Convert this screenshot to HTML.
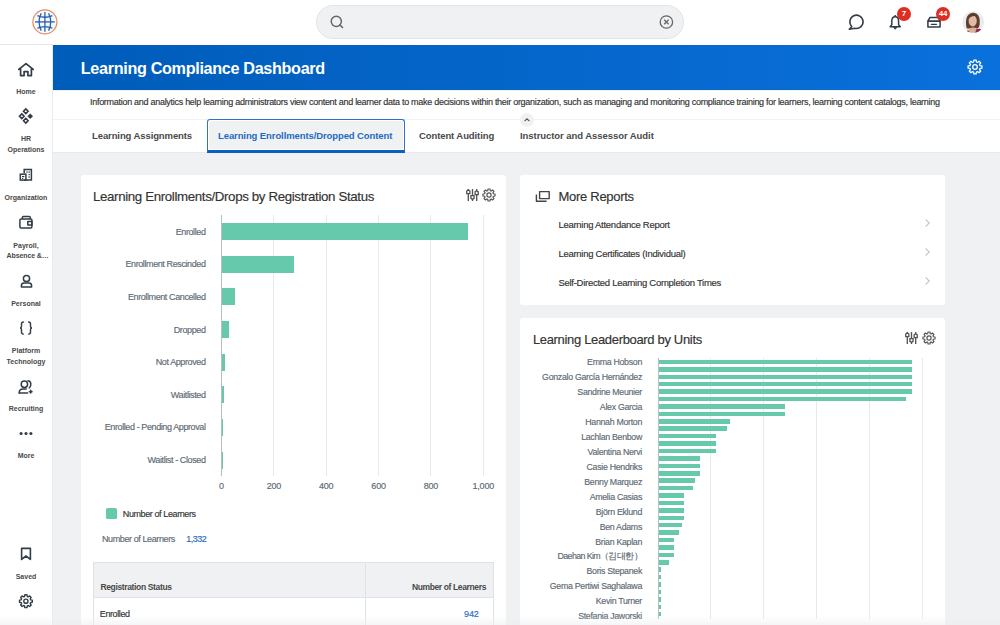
<!DOCTYPE html>
<html><head><meta charset="utf-8"><style>
html,body{margin:0;padding:0;width:1000px;height:625px;overflow:hidden;background:#fff;font-family:"Liberation Sans", sans-serif;}
.t{position:absolute;white-space:nowrap;font-family:"Liberation Sans", sans-serif;}
svg{overflow:visible}
</style></head><body>
<div style="position:absolute;left:53px;top:45px;width:947px;height:580px;background:#f0f1f2"></div>
<div style="position:absolute;left:0px;top:0px;width:1000px;height:44px;background:#fff"></div>
<div style="position:absolute;left:0px;top:44px;width:53px;height:1px;background:#e4e7ea"></div>
<svg style="position:absolute;left:31px;top:8px" width="28" height="28" viewBox="0 0 28 28"><circle cx="13.9" cy="13.9" r="12" fill="#f4faff" stroke="#e58a5a" stroke-width="1.2"/>
<g fill="none" stroke="#2b5ea9" stroke-width="1.3">
<line x1="13.9" y1="4.1" x2="13.9" y2="23.7"/><line x1="4" y1="13.9" x2="23.8" y2="13.9"/>
<path d="M10.2 5.2 Q6 14 10.2 22.6"/><path d="M17.6 5.2 Q21.8 14 17.6 22.6"/>
<path d="M6.4 7.6 Q13.9 10.9 21.4 7.6"/><path d="M6.4 20.2 Q13.9 16.9 21.4 20.2"/>
</g></svg>
<div style="position:absolute;left:316px;top:5px;width:368px;height:34px;background:#f0f1f2;border:1px solid #e2e5e8;border-radius:17px;box-sizing:border-box"></div>
<svg style="position:absolute;left:328px;top:13px" width="18" height="18" viewBox="0 0 18 18"><circle cx="8.3" cy="8.3" r="5.1" fill="none" stroke="#666" stroke-width="1.5"/><line x1="12" y1="12" x2="14.5" y2="14.5" stroke="#666" stroke-width="1.6" stroke-linecap="round"/></svg>
<svg style="position:absolute;left:658px;top:14px" width="17" height="17" viewBox="0 0 17 17"><circle cx="8.4" cy="8" r="6.2" fill="none" stroke="#666" stroke-width="1.3"/><path d="M6.2 5.8 L10.6 10.2 M10.6 5.8 L6.2 10.2" stroke="#666" stroke-width="1.3"/></svg>
<svg style="position:absolute;left:846px;top:12px" width="20" height="20" viewBox="0 0 20 20"><path d="M5.83 14.47 L3.3 17.3 L8.8 16.17 A6.6 6.6 0 1 0 5.83 14.47 Z" fill="none" stroke="#333d47" stroke-width="1.55" stroke-linejoin="round"/></svg>
<svg style="position:absolute;left:887px;top:12.8px" width="17" height="18" viewBox="0 0 17 18"><path d="M8.2 3.7 C5.6 3.7 4.8 5.9 4.8 8.1 L4.8 11.7 L3.1 13.7 L13.3 13.7 L11.6 11.7 L11.6 8.1 C11.6 5.9 10.8 3.7 8.2 3.7 Z" fill="none" stroke="#333d47" stroke-width="1.5" stroke-linejoin="round"/><path d="M6.5 14.3 L9.9 14.3 L8.2 16.3 Z" fill="#333d47" stroke="#333d47" stroke-width="0.8" stroke-linejoin="round"/><circle cx="8.2" cy="3" r="1" fill="#333d47"/></svg>
<div style="position:absolute;left:897px;top:7px;width:14px;height:14px;background:#de2e21;border-radius:50%"></div>
<div class="t" style="top:10.23px;font-size:8px;line-height:8px;font-weight:700;color:#fff;letter-spacing:0px;left:604px;width:600px;text-align:center;">7</div>
<svg style="position:absolute;left:925px;top:15px" width="18" height="15" viewBox="0 0 18 15"><path d="M2.9 6.2 L4.8 2.6 L13.2 2.6 L15.1 6.2 Z" fill="none" stroke="#333d47" stroke-width="1.5" stroke-linejoin="round"/><rect x="2.9" y="6.2" width="12.2" height="5.7" fill="none" stroke="#333d47" stroke-width="1.5" stroke-linejoin="round"/><line x1="6.3" y1="9.3" x2="11.5" y2="9.3" stroke="#333d47" stroke-width="1.3" stroke-linecap="round"/></svg>
<div style="position:absolute;left:936px;top:7px;width:14px;height:14px;background:#de2e21;border-radius:50%"></div>
<div class="t" style="top:10.23px;font-size:8px;line-height:8px;font-weight:700;color:#fff;letter-spacing:-0.3px;left:643px;width:600px;text-align:center;">44</div>
<svg style="position:absolute;left:961px;top:10px" width="24" height="24" viewBox="0 0 24 24"><defs><clipPath id="av"><circle cx="12.2" cy="12" r="10.8"/></clipPath></defs>
<circle cx="12.2" cy="12" r="10.8" fill="#ececec"/>
<g clip-path="url(#av)">
<path d="M5.8 18.4 C4.2 13 4.4 3.6 11.6 2.8 C17.8 2.6 19.2 8.5 18.7 12.5 C18.9 15.5 18.1 17.6 16.6 18.4 Z" fill="#5e3f2e"/>
<ellipse cx="11.7" cy="10.9" rx="4.1" ry="5.6" fill="#dfbaa5"/>
<path d="M7.4 8.6 C8.2 4.6 12.5 3.6 16 5.8 C13.5 5.6 10.5 6.2 7.4 8.6Z" fill="#5b3b2b"/>
<path d="M5.5 24 C6.5 19.5 9 17.6 12 17.6 C15 17.6 17.5 19 18.8 24Z" fill="#d9b09a"/>
<path d="M14.2 24 L15 19.6 C17.2 18.4 19.6 18.6 21.5 20.4 L21.5 24Z" fill="#9e2450"/>
<path d="M4.5 24 L6.2 20.6 L8.4 21.2 L7.8 24Z" fill="#9e2450"/>
</g></svg>
<div style="position:absolute;left:0px;top:45px;width:52px;height:580px;background:#fff"></div>
<div style="position:absolute;left:52px;top:45px;width:1px;height:580px;background:#e8ebed"></div>
<svg style="position:absolute;left:17px;top:61px" width="18" height="17" viewBox="0 0 18 17"><path d="M1.8 8.4 L9 2.6 L16.2 8.4 M3.6 7 L3.6 14.6 L7.1 14.6 L7.1 10.6 L10.9 10.6 L10.9 14.6 L14.4 14.6 L14.4 7" fill="none" stroke="#333d47" stroke-width="1.7" stroke-linejoin="round" stroke-linecap="round"/></svg>
<div class="t" style="top:88.27px;font-size:7px;line-height:7px;font-weight:700;color:#494949;letter-spacing:0px;left:-274px;width:600px;text-align:center;">Home</div>
<svg style="position:absolute;left:18px;top:108px" width="17" height="17" viewBox="0 0 17 17"><g fill="none" stroke="#333d47" stroke-width="1.6"><path d="M7.8 0.9 L10.1 3.2 L7.8 5.5 L5.5 3.2Z"/><path d="M3.8 5.9 L6.1 8.2 L3.8 10.5 L1.5 8.2Z"/><path d="M7.8 10.4 L10.1 12.7 L7.8 15 L5.5 12.7Z"/></g><path d="M12.2 5.4 L15 8.2 L12.2 11 L9.4 8.2Z" fill="#333d47"/></svg>
<div class="t" style="top:134.57px;font-size:7px;line-height:7px;font-weight:700;color:#494949;letter-spacing:0px;left:-274px;width:600px;text-align:center;">HR</div>
<div class="t" style="top:146.37px;font-size:7px;line-height:7px;font-weight:700;color:#494949;letter-spacing:0px;left:-274px;width:600px;text-align:center;">Operations</div>
<svg style="position:absolute;left:18px;top:167px" width="17" height="16" viewBox="0 0 17 16"><g fill="none" stroke="#333d47" stroke-width="1.5"><path d="M6.2 6.5 L6.2 2.6 L13.4 2.6 L13.4 13.1 L6.2 13.1"/><rect x="2.3" y="7.2" width="5.6" height="5.9"/></g><g fill="#333d47"><rect x="8.4" y="4.4" width="1.3" height="1.3"/><rect x="10.5" y="4.4" width="1.3" height="1.3"/><rect x="10.5" y="6.9" width="1.3" height="1.3"/><rect x="10.5" y="9.4" width="1.3" height="1.3"/><rect x="4" y="9" width="2.3" height="1.2"/><rect x="4" y="11" width="1.2" height="1.2"/></g></svg>
<div class="t" style="top:194.07px;font-size:7px;line-height:7px;font-weight:700;color:#494949;letter-spacing:0px;left:-274px;width:600px;text-align:center;">Organization</div>
<svg style="position:absolute;left:18px;top:214px" width="17" height="16" viewBox="0 0 17 16"><g fill="none" stroke="#333d47" stroke-width="1.5" stroke-linejoin="round"><path d="M4.4 4.9 L4.4 3.2 Q4.4 2.4 5.2 2.4 L11.4 2.4 Q12.2 2.4 12.2 3.2 L12.2 4.9"/><rect x="1.9" y="4.9" width="12" height="9" rx="1.2"/><rect x="9.8" y="7.6" width="4.1" height="3.4"/></g></svg>
<div class="t" style="top:241.77px;font-size:7px;line-height:7px;font-weight:700;color:#494949;letter-spacing:0px;left:-274px;width:600px;text-align:center;">Payroll,</div>
<div class="t" style="top:251.87px;font-size:7px;line-height:7px;font-weight:700;color:#494949;letter-spacing:-0.1px;left:-272.4px;width:600px;text-align:center;">Absence &amp;&hellip;</div>
<svg style="position:absolute;left:18px;top:273px" width="17" height="16" viewBox="0 0 17 16"><g fill="none" stroke="#333d47" stroke-width="1.5"><circle cx="8.5" cy="5.5" r="3.1"/><path d="M3.4 13.9 L3.4 12.8 Q3.4 10.1 6.2 10.1 L10.8 10.1 Q13.6 10.1 13.6 12.8 L13.6 13.9 Z" stroke-linejoin="round"/></g></svg>
<div class="t" style="top:299.67px;font-size:7px;line-height:7px;font-weight:700;color:#494949;letter-spacing:0px;left:-274px;width:600px;text-align:center;">Personal</div>
<svg style="position:absolute;left:17px;top:320px" width="18" height="16" viewBox="0 0 18 16"><g fill="none" stroke="#333d47" stroke-width="1.45" stroke-linecap="round"><path d="M6.4 1.9 Q4.5 1.9 4.5 3.9 L4.5 6.3 Q4.5 7.9 3 7.9 Q4.5 7.9 4.5 9.5 L4.5 12.1 Q4.5 14.1 6.4 14.1"/><path d="M11.6 1.9 Q13.5 1.9 13.5 3.9 L13.5 6.3 Q13.5 7.9 15 7.9 Q13.5 7.9 13.5 9.5 L13.5 12.1 Q13.5 14.1 11.6 14.1"/></g></svg>
<div class="t" style="top:346.67px;font-size:7px;line-height:7px;font-weight:700;color:#494949;letter-spacing:0px;left:-274px;width:600px;text-align:center;">Platform</div>
<div class="t" style="top:357.67px;font-size:7px;line-height:7px;font-weight:700;color:#494949;letter-spacing:0px;left:-274px;width:600px;text-align:center;">Technology</div>
<svg style="position:absolute;left:17px;top:378px" width="18" height="17" viewBox="0 0 18 17"><g fill="none" stroke="#333d47" stroke-width="1.5" stroke-linecap="round"><circle cx="7.4" cy="6.3" r="3.2"/><path d="M2.2 15 Q2.2 11.1 6 11.1 L9.2 11.1"/><path d="M2.2 15 L10.6 15"/><path d="M11 2.8 Q14.4 3.4 13.7 7.4 Q13.4 9.2 12.2 9.9"/><path d="M13.7 12.4 L13.7 15 M12.4 13.7 L15 13.7" stroke-width="1.6"/></g></svg>
<div class="t" style="top:404.67px;font-size:7px;line-height:7px;font-weight:700;color:#494949;letter-spacing:0px;left:-274px;width:600px;text-align:center;">Recruiting</div>
<svg style="position:absolute;left:17px;top:430px" width="18" height="8" viewBox="0 0 18 8"><g fill="#333d47"><circle cx="4.1" cy="3.5" r="1.55"/><circle cx="9" cy="3.5" r="1.55"/><circle cx="13.9" cy="3.5" r="1.55"/></g></svg>
<div class="t" style="top:451.67px;font-size:7px;line-height:7px;font-weight:700;color:#494949;letter-spacing:0px;left:-274px;width:600px;text-align:center;">More</div>
<svg style="position:absolute;left:18px;top:546px" width="16" height="16" viewBox="0 0 16 16"><path d="M3.6 2.4 L12.4 2.4 L12.4 13.4 L8 10 L3.6 13.4 Z" fill="none" stroke="#333d47" stroke-width="1.6" stroke-linejoin="round"/></svg>
<div class="t" style="top:573.07px;font-size:7px;line-height:7px;font-weight:700;color:#494949;letter-spacing:0px;left:-274px;width:600px;text-align:center;">Saved</div>
<svg style="position:absolute;left:17px;top:592px" width="18" height="18" viewBox="0 0 18 18"><path d="M7.53 4.49 L7.83 2.79 L9.97 2.79 L10.27 4.49 L11.26 4.91 L12.68 3.91 L14.19 5.42 L13.19 6.84 L13.61 7.83 L15.31 8.13 L15.31 10.27 L13.61 10.57 L13.19 11.56 L14.19 12.98 L12.68 14.49 L11.26 13.49 L10.27 13.91 L9.97 15.61 L7.83 15.61 L7.53 13.91 L6.54 13.49 L5.12 14.49 L3.61 12.98 L4.61 11.56 L4.19 10.57 L2.49 10.27 L2.49 8.13 L4.19 7.83 L4.61 6.84 L3.61 5.42 L5.12 3.91 L6.54 4.91 Z" fill="none" stroke="#333d47" stroke-width="1.4" stroke-linejoin="round"/><circle cx="8.9" cy="9.2" r="2.1" fill="none" stroke="#333d47" stroke-width="1.4"/></svg>
<div style="position:absolute;left:53px;top:44.8px;width:947px;height:45.7px;background:linear-gradient(90deg,#005cb9 0%,#0a70dc 100%)"></div>
<div class="t" style="top:59.59px;font-size:16.2px;line-height:16.2px;font-weight:700;color:#fff;letter-spacing:-0.33px;left:80.8px;">Learning Compliance Dashboard</div>
<svg style="position:absolute;left:966px;top:58px" width="18" height="18" viewBox="0 0 18 18"><path d="M7.55 4.01 L7.85 2.09 L10.15 2.09 L10.45 4.01 L11.51 4.44 L13.07 3.30 L14.70 4.93 L13.56 6.49 L13.99 7.55 L15.91 7.85 L15.91 10.15 L13.99 10.45 L13.56 11.51 L14.70 13.07 L13.07 14.70 L11.51 13.56 L10.45 13.99 L10.15 15.91 L7.85 15.91 L7.55 13.99 L6.49 13.56 L4.93 14.70 L3.30 13.07 L4.44 11.51 L4.01 10.45 L2.09 10.15 L2.09 7.85 L4.01 7.55 L4.44 6.49 L3.30 4.93 L4.93 3.30 L6.49 4.44 Z" fill="none" stroke="#fff" stroke-width="1.3" stroke-linejoin="round"/><circle cx="9" cy="9" r="2.3" fill="none" stroke="#fff" stroke-width="1.3"/></svg>
<div style="position:absolute;left:53px;top:90.5px;width:947px;height:28.5px;background:#fff"></div>
<div class="t" style="top:98.08px;font-size:9px;line-height:9px;font-weight:400;color:#333;letter-spacing:-0.285px;-webkit-text-stroke:0.16px currentColor;left:90px;">Information and analytics help learning administrators view content and learner data to make decisions within their organization, such as managing and monitoring compliance training for learners, learning content catalogs, learning</div>
<div style="position:absolute;left:53px;top:119px;width:947px;height:1px;background:#f2f3f4"></div>
<div style="position:absolute;left:53px;top:120px;width:947px;height:32px;background:#fff"></div>
<div style="position:absolute;left:53px;top:152px;width:947px;height:1px;background:#e8ebed"></div>
<div class="t" style="top:130.96px;font-size:9.5px;line-height:9.5px;font-weight:700;color:#494949;letter-spacing:-0.1px;left:92px;">Learning Assignments</div>
<div style="position:absolute;left:207px;top:119px;width:198px;height:33.5px;background:#f0f1f2;border:1.5px solid #2e72c9;border-bottom:3px solid #0b5fc2;border-radius:3px 3px 0 0;box-sizing:border-box;box-shadow:inset 0 0 0 1px #fff"></div>
<div class="t" style="top:130.96px;font-size:9.5px;line-height:9.5px;font-weight:700;color:#1e6bc4;letter-spacing:-0.1px;left:218px;">Learning Enrollments/Dropped Content</div>
<div class="t" style="top:130.96px;font-size:9.5px;line-height:9.5px;font-weight:700;color:#494949;letter-spacing:-0.1px;left:419px;">Content Auditing</div>
<div class="t" style="top:130.96px;font-size:9.5px;line-height:9.5px;font-weight:700;color:#494949;letter-spacing:-0.06px;left:520px;">Instructor and Assessor Audit</div>
<div style="position:absolute;left:520px;top:113px;width:14px;height:14px;background:#f0f1f2;border-radius:50%"></div>
<svg style="position:absolute;left:520px;top:113px" width="14" height="14" viewBox="0 0 14 14"><path d="M4.6 8.2 L7 5.8 L9.4 8.2" fill="none" stroke="#555" stroke-width="1.1"/></svg>
<div style="position:absolute;left:81px;top:175px;width:425px;height:460px;background:#fff;border-radius:3px"></div>
<div class="t" style="top:189.74px;font-size:13.3px;line-height:13.3px;font-weight:400;color:#333;letter-spacing:-0.36px;-webkit-text-stroke:0.16px currentColor;left:93px;">Learning Enrollments/Drops by Registration Status</div>
<svg style="position:absolute;left:466px;top:188.2px" width="14" height="14" viewBox="0 0 14 14"><g stroke="#555" stroke-width="1.35" fill="none"><line x1="2.3" y1="1" x2="2.3" y2="2"/><line x1="2.3" y1="6" x2="2.3" y2="13"/><line x1="6.5" y1="1" x2="6.5" y2="7.6"/><line x1="6.5" y1="11.6" x2="6.5" y2="13"/><line x1="10.7" y1="1" x2="10.7" y2="2.8"/><line x1="10.7" y1="6.9" x2="10.7" y2="13"/><path d="M0.7499999999999998 3.0 L2.3 1.9 L3.8499999999999996 3.0 L3.8499999999999996 5.6 L0.7499999999999998 5.6 Z"/><path d="M4.95 7.6 L8.05 7.6 L8.05 10.3 L6.5 11.4 L4.95 10.3 Z"/><path d="M9.149999999999999 3.9 L10.7 2.8 L12.25 3.9 L12.25 6.6 L9.149999999999999 6.6 Z"/></g></svg>
<svg style="position:absolute;left:481.4px;top:187.4px" width="16" height="16" viewBox="0 0 16 16"><path d="M6.74 3.68 L7.00 1.98 L9.00 1.98 L9.26 3.68 L10.17 4.06 L11.55 3.04 L12.96 4.45 L11.94 5.83 L12.32 6.74 L14.02 7.00 L14.02 9.00 L12.32 9.26 L11.94 10.17 L12.96 11.55 L11.55 12.96 L10.17 11.94 L9.26 12.32 L9.00 14.02 L7.00 14.02 L6.74 12.32 L5.83 11.94 L4.45 12.96 L3.04 11.55 L4.06 10.17 L3.68 9.26 L1.98 9.00 L1.98 7.00 L3.68 6.74 L4.06 5.83 L3.04 4.45 L4.45 3.04 L5.83 4.06 Z" fill="none" stroke="#555" stroke-width="1.2" stroke-linejoin="round"/><circle cx="8" cy="8" r="2.1" fill="none" stroke="#555" stroke-width="1.2"/></svg>
<div style="position:absolute;left:273.35px;top:215px;width:1px;height:260.5px;background:#e8e9eb"></div>
<div style="position:absolute;left:325.7px;top:215px;width:1px;height:260.5px;background:#e8e9eb"></div>
<div style="position:absolute;left:378.05px;top:215px;width:1px;height:260.5px;background:#e8e9eb"></div>
<div style="position:absolute;left:430.4px;top:215px;width:1px;height:260.5px;background:#e8e9eb"></div>
<div style="position:absolute;left:482.75px;top:215px;width:1px;height:260.5px;background:#e8e9eb"></div>
<div style="position:absolute;left:221.5px;top:223.0px;width:246.56849999999997px;height:17px;background:#66c9ab"></div>
<div class="t" style="top:227.58px;font-size:9px;line-height:9px;font-weight:400;color:#5e6a75;letter-spacing:-0.4px;-webkit-text-stroke:0.16px currentColor;right:794.5px;text-align:right;">Enrolled</div>
<div style="position:absolute;left:221.5px;top:255.65px;width:72.7665px;height:17px;background:#66c9ab"></div>
<div class="t" style="top:260.23px;font-size:9px;line-height:9px;font-weight:400;color:#5e6a75;letter-spacing:-0.4px;-webkit-text-stroke:0.16px currentColor;right:794.5px;text-align:right;">Enrollment Rescinded</div>
<div style="position:absolute;left:221.5px;top:288.3px;width:13.087499999999999px;height:17px;background:#66c9ab"></div>
<div class="t" style="top:292.88px;font-size:9px;line-height:9px;font-weight:400;color:#5e6a75;letter-spacing:-0.4px;-webkit-text-stroke:0.16px currentColor;right:794.5px;text-align:right;">Enrollment Cancelled</div>
<div style="position:absolute;left:221.5px;top:320.95px;width:7.06725px;height:17px;background:#66c9ab"></div>
<div class="t" style="top:325.53px;font-size:9px;line-height:9px;font-weight:400;color:#5e6a75;letter-spacing:-0.4px;-webkit-text-stroke:0.16px currentColor;right:794.5px;text-align:right;">Dropped</div>
<div style="position:absolute;left:221.5px;top:353.6px;width:3.9262499999999996px;height:17px;background:#66c9ab"></div>
<div class="t" style="top:358.18px;font-size:9px;line-height:9px;font-weight:400;color:#5e6a75;letter-spacing:-0.4px;-webkit-text-stroke:0.16px currentColor;right:794.5px;text-align:right;">Not Approved</div>
<div style="position:absolute;left:221.5px;top:386.25px;width:2.35575px;height:17px;background:#66c9ab"></div>
<div class="t" style="top:390.83px;font-size:9px;line-height:9px;font-weight:400;color:#5e6a75;letter-spacing:-0.4px;-webkit-text-stroke:0.16px currentColor;right:794.5px;text-align:right;">Waitlisted</div>
<div style="position:absolute;left:221.5px;top:418.9px;width:1.9631249999999998px;height:17px;background:#66c9ab"></div>
<div class="t" style="top:423.48px;font-size:9px;line-height:9px;font-weight:400;color:#5e6a75;letter-spacing:-0.4px;-webkit-text-stroke:0.16px currentColor;right:794.5px;text-align:right;">Enrolled - Pending Approval</div>
<div style="position:absolute;left:221.5px;top:451.54999999999995px;width:1.5705px;height:17px;background:#66c9ab"></div>
<div class="t" style="top:456.13px;font-size:9px;line-height:9px;font-weight:400;color:#5e6a75;letter-spacing:-0.4px;-webkit-text-stroke:0.16px currentColor;right:794.5px;text-align:right;">Waitlist - Closed</div>
<div style="position:absolute;left:221.0px;top:215px;width:1px;height:260.5px;background:#b9bec4"></div>
<div class="t" style="top:481.98px;font-size:9px;line-height:9px;font-weight:400;color:#5e6a75;letter-spacing:-0.2px;-webkit-text-stroke:0.16px currentColor;left:-78.5px;width:600px;text-align:center;">0</div>
<div class="t" style="top:481.98px;font-size:9px;line-height:9px;font-weight:400;color:#5e6a75;letter-spacing:-0.2px;-webkit-text-stroke:0.16px currentColor;left:-26.149999999999977px;width:600px;text-align:center;">200</div>
<div class="t" style="top:481.98px;font-size:9px;line-height:9px;font-weight:400;color:#5e6a75;letter-spacing:-0.2px;-webkit-text-stroke:0.16px currentColor;left:26.19999999999999px;width:600px;text-align:center;">400</div>
<div class="t" style="top:481.98px;font-size:9px;line-height:9px;font-weight:400;color:#5e6a75;letter-spacing:-0.2px;-webkit-text-stroke:0.16px currentColor;left:78.55000000000001px;width:600px;text-align:center;">600</div>
<div class="t" style="top:481.98px;font-size:9px;line-height:9px;font-weight:400;color:#5e6a75;letter-spacing:-0.2px;-webkit-text-stroke:0.16px currentColor;left:130.89999999999998px;width:600px;text-align:center;">800</div>
<div class="t" style="top:481.98px;font-size:9px;line-height:9px;font-weight:400;color:#5e6a75;letter-spacing:-0.2px;-webkit-text-stroke:0.16px currentColor;left:183.25px;width:600px;text-align:center;">1,000</div>
<div style="position:absolute;left:105.8px;top:508.2px;width:11px;height:11px;background:#66c9ab;border-radius:1.5px"></div>
<div class="t" style="top:510.18px;font-size:9px;line-height:9px;font-weight:400;color:#333;letter-spacing:-0.4px;-webkit-text-stroke:0.16px currentColor;left:122.8px;">Number of Learners</div>
<div class="t" style="top:534.68px;font-size:9px;line-height:9px;font-weight:400;color:#5e6a75;letter-spacing:-0.4px;-webkit-text-stroke:0.16px currentColor;left:102px;">Number of Learners</div>
<div class="t" style="top:534.68px;font-size:9px;line-height:9px;font-weight:400;color:#2c6cbf;letter-spacing:-0.5px;-webkit-text-stroke:0.16px currentColor;left:186.2px;">1,332</div>
<div style="position:absolute;left:93px;top:562px;width:400.5px;height:70px;border:1px solid #dfe2e6;box-sizing:border-box"></div>
<div style="position:absolute;left:94px;top:563px;width:398.5px;height:34px;background:#f0f1f2"></div>
<div style="position:absolute;left:93px;top:596.5px;width:400.5px;height:1px;background:#dfe2e6"></div>
<div style="position:absolute;left:365.2px;top:562px;width:1px;height:70px;background:#dfe2e6"></div>
<div class="t" style="top:582.80px;font-size:8.5px;line-height:8.5px;font-weight:700;color:#494949;letter-spacing:-0.35px;left:100.4px;">Registration Status</div>
<div class="t" style="top:582.80px;font-size:8.5px;line-height:8.5px;font-weight:700;color:#494949;letter-spacing:-0.37px;right:514px;text-align:right;">Number of Learners</div>
<div class="t" style="top:609.78px;font-size:9px;line-height:9px;font-weight:400;color:#333;letter-spacing:-0.4px;-webkit-text-stroke:0.16px currentColor;left:99.8px;">Enrolled</div>
<div class="t" style="top:609.78px;font-size:9px;line-height:9px;font-weight:400;color:#2c6cbf;letter-spacing:-0.1px;-webkit-text-stroke:0.16px currentColor;right:521.3px;text-align:right;">942</div>
<div style="position:absolute;left:520px;top:175px;width:425px;height:130px;background:#fff;border-radius:3px"></div>
<svg style="position:absolute;left:534px;top:188px" width="18" height="16" viewBox="0 0 18 16"><g fill="none" stroke="#444" stroke-width="1.4" stroke-linejoin="round"><rect x="5.6" y="3.6" width="9.6" height="7"/><path d="M2.4 6.4 L2.4 13.3 L12.6 13.3"/></g></svg>
<div class="t" style="top:189.60px;font-size:13px;line-height:13px;font-weight:400;color:#333;letter-spacing:-0.3px;-webkit-text-stroke:0.16px currentColor;left:558.6px;">More Reports</div>
<div class="t" style="top:220.16px;font-size:9.5px;line-height:9.5px;font-weight:400;color:#333;letter-spacing:-0.27px;-webkit-text-stroke:0.16px currentColor;left:558.4px;">Learning Attendance Report</div>
<svg style="position:absolute;left:923px;top:218.39999999999998px" width="8" height="10" viewBox="0 0 8 10"><path d="M2.6 1.4 L6.2 5 L2.6 8.6" fill="none" stroke="#c2c6ca" stroke-width="1.2"/></svg>
<div class="t" style="top:248.86px;font-size:9.5px;line-height:9.5px;font-weight:400;color:#333;letter-spacing:-0.27px;-webkit-text-stroke:0.16px currentColor;left:558.4px;">Learning Certificates (Individual)</div>
<svg style="position:absolute;left:923px;top:247.09999999999997px" width="8" height="10" viewBox="0 0 8 10"><path d="M2.6 1.4 L6.2 5 L2.6 8.6" fill="none" stroke="#c2c6ca" stroke-width="1.2"/></svg>
<div class="t" style="top:277.56px;font-size:9.5px;line-height:9.5px;font-weight:400;color:#333;letter-spacing:-0.27px;-webkit-text-stroke:0.16px currentColor;left:558.4px;">Self-Directed Learning Completion Times</div>
<svg style="position:absolute;left:923px;top:275.79999999999995px" width="8" height="10" viewBox="0 0 8 10"><path d="M2.6 1.4 L6.2 5 L2.6 8.6" fill="none" stroke="#c2c6ca" stroke-width="1.2"/></svg>
<div style="position:absolute;left:520px;top:318px;width:425px;height:320px;background:#fff;border-radius:3px"></div>
<div class="t" style="top:333.00px;font-size:13px;line-height:13px;font-weight:400;color:#333;letter-spacing:-0.33px;-webkit-text-stroke:0.16px currentColor;left:532.9px;">Learning Leaderboard by Units</div>
<svg style="position:absolute;left:905px;top:331px" width="14" height="14" viewBox="0 0 14 14"><g stroke="#555" stroke-width="1.35" fill="none"><line x1="2.3" y1="1" x2="2.3" y2="2"/><line x1="2.3" y1="6" x2="2.3" y2="13"/><line x1="6.5" y1="1" x2="6.5" y2="7.6"/><line x1="6.5" y1="11.6" x2="6.5" y2="13"/><line x1="10.7" y1="1" x2="10.7" y2="2.8"/><line x1="10.7" y1="6.9" x2="10.7" y2="13"/><path d="M0.7499999999999998 3.0 L2.3 1.9 L3.8499999999999996 3.0 L3.8499999999999996 5.6 L0.7499999999999998 5.6 Z"/><path d="M4.95 7.6 L8.05 7.6 L8.05 10.3 L6.5 11.4 L4.95 10.3 Z"/><path d="M9.149999999999999 3.9 L10.7 2.8 L12.25 3.9 L12.25 6.6 L9.149999999999999 6.6 Z"/></g></svg>
<svg style="position:absolute;left:920.5px;top:330.3px" width="16" height="16" viewBox="0 0 16 16"><path d="M6.74 3.68 L7.00 1.98 L9.00 1.98 L9.26 3.68 L10.17 4.06 L11.55 3.04 L12.96 4.45 L11.94 5.83 L12.32 6.74 L14.02 7.00 L14.02 9.00 L12.32 9.26 L11.94 10.17 L12.96 11.55 L11.55 12.96 L10.17 11.94 L9.26 12.32 L9.00 14.02 L7.00 14.02 L6.74 12.32 L5.83 11.94 L4.45 12.96 L3.04 11.55 L4.06 10.17 L3.68 9.26 L1.98 9.00 L1.98 7.00 L3.68 6.74 L4.06 5.83 L3.04 4.45 L4.45 3.04 L5.83 4.06 Z" fill="none" stroke="#555" stroke-width="1.2" stroke-linejoin="round"/><circle cx="8" cy="8" r="2.1" fill="none" stroke="#555" stroke-width="1.2"/></svg>
<div style="position:absolute;left:709.73px;top:358px;width:1px;height:260.5px;background:#e8e9eb"></div>
<div style="position:absolute;left:762.76px;top:358px;width:1px;height:260.5px;background:#e8e9eb"></div>
<div style="position:absolute;left:815.7900000000001px;top:358px;width:1px;height:260.5px;background:#e8e9eb"></div>
<div style="position:absolute;left:868.82px;top:358px;width:1px;height:260.5px;background:#e8e9eb"></div>
<div style="position:absolute;left:921.85px;top:358px;width:1px;height:260.5px;background:#e8e9eb"></div>
<div style="position:absolute;left:658px;top:359.7px;width:253.79999999999995px;height:4.5px;background:#66c9ab"></div>
<div style="position:absolute;left:658px;top:367.12px;width:253.79999999999995px;height:4.5px;background:#66c9ab"></div>
<div style="position:absolute;left:658px;top:374.53999999999996px;width:253.79999999999995px;height:4.5px;background:#66c9ab"></div>
<div style="position:absolute;left:658px;top:381.96px;width:253.79999999999995px;height:4.5px;background:#66c9ab"></div>
<div style="position:absolute;left:658px;top:389.38px;width:253.79999999999995px;height:4.5px;background:#66c9ab"></div>
<div style="position:absolute;left:658px;top:396.8px;width:248.10000000000002px;height:4.5px;background:#66c9ab"></div>
<div style="position:absolute;left:658px;top:404.21999999999997px;width:126.89999999999998px;height:4.5px;background:#66c9ab"></div>
<div style="position:absolute;left:658px;top:411.64px;width:126.89999999999998px;height:4.5px;background:#66c9ab"></div>
<div style="position:absolute;left:658px;top:419.06px;width:71.70000000000005px;height:4.5px;background:#66c9ab"></div>
<div style="position:absolute;left:658px;top:426.48px;width:68.70000000000005px;height:4.5px;background:#66c9ab"></div>
<div style="position:absolute;left:658px;top:433.9px;width:57.89999999999998px;height:4.5px;background:#66c9ab"></div>
<div style="position:absolute;left:658px;top:441.32px;width:57.89999999999998px;height:4.5px;background:#66c9ab"></div>
<div style="position:absolute;left:658px;top:448.74px;width:57.89999999999998px;height:4.5px;background:#66c9ab"></div>
<div style="position:absolute;left:658px;top:456.15999999999997px;width:42px;height:4.5px;background:#66c9ab"></div>
<div style="position:absolute;left:658px;top:463.58px;width:42px;height:4.5px;background:#66c9ab"></div>
<div style="position:absolute;left:658px;top:471.0px;width:42px;height:4.5px;background:#66c9ab"></div>
<div style="position:absolute;left:658px;top:478.41999999999996px;width:36.799999999999955px;height:4.5px;background:#66c9ab"></div>
<div style="position:absolute;left:658px;top:485.84px;width:34.89999999999998px;height:4.5px;background:#66c9ab"></div>
<div style="position:absolute;left:658px;top:493.26px;width:26.200000000000045px;height:4.5px;background:#66c9ab"></div>
<div style="position:absolute;left:658px;top:500.67999999999995px;width:26.200000000000045px;height:4.5px;background:#66c9ab"></div>
<div style="position:absolute;left:658px;top:508.1px;width:26.200000000000045px;height:4.5px;background:#66c9ab"></div>
<div style="position:absolute;left:658px;top:515.52px;width:26.200000000000045px;height:4.5px;background:#66c9ab"></div>
<div style="position:absolute;left:658px;top:522.94px;width:24.200000000000045px;height:4.5px;background:#66c9ab"></div>
<div style="position:absolute;left:658px;top:530.36px;width:21px;height:4.5px;background:#66c9ab"></div>
<div style="position:absolute;left:658px;top:537.78px;width:15.700000000000045px;height:4.5px;background:#66c9ab"></div>
<div style="position:absolute;left:658px;top:545.2px;width:15.700000000000045px;height:4.5px;background:#66c9ab"></div>
<div style="position:absolute;left:658px;top:552.62px;width:15.700000000000045px;height:4.5px;background:#66c9ab"></div>
<div style="position:absolute;left:658px;top:560.04px;width:10.5px;height:4.5px;background:#66c9ab"></div>
<div style="position:absolute;left:658px;top:567.46px;width:3px;height:4.5px;background:#66c9ab"></div>
<div style="position:absolute;left:658px;top:574.88px;width:3px;height:4.5px;background:#66c9ab"></div>
<div style="position:absolute;left:658px;top:582.3px;width:3px;height:4.5px;background:#66c9ab"></div>
<div style="position:absolute;left:658px;top:589.72px;width:3px;height:4.5px;background:#66c9ab"></div>
<div style="position:absolute;left:658px;top:597.14px;width:3px;height:4.5px;background:#66c9ab"></div>
<div style="position:absolute;left:658px;top:604.56px;width:3px;height:4.5px;background:#66c9ab"></div>
<div style="position:absolute;left:658px;top:611.98px;width:3px;height:4.5px;background:#66c9ab"></div>
<div style="position:absolute;left:657.5px;top:358px;width:1px;height:260.5px;background:#b9bec4"></div>
<div class="t" style="top:358.35px;font-size:8.8px;line-height:8.8px;font-weight:400;color:#5e6a75;letter-spacing:-0.3px;-webkit-text-stroke:0.16px currentColor;right:358px;text-align:right;">Emma Hobson</div>
<div class="t" style="top:373.28px;font-size:8.8px;line-height:8.8px;font-weight:400;color:#5e6a75;letter-spacing:-0.3px;-webkit-text-stroke:0.16px currentColor;right:358px;text-align:right;">Gonzalo García Hernández</div>
<div class="t" style="top:388.21px;font-size:8.8px;line-height:8.8px;font-weight:400;color:#5e6a75;letter-spacing:-0.3px;-webkit-text-stroke:0.16px currentColor;right:358px;text-align:right;">Sandrine Meunier</div>
<div class="t" style="top:403.14px;font-size:8.8px;line-height:8.8px;font-weight:400;color:#5e6a75;letter-spacing:-0.3px;-webkit-text-stroke:0.16px currentColor;right:358px;text-align:right;">Alex Garcia</div>
<div class="t" style="top:418.07px;font-size:8.8px;line-height:8.8px;font-weight:400;color:#5e6a75;letter-spacing:-0.3px;-webkit-text-stroke:0.16px currentColor;right:358px;text-align:right;">Hannah Morton</div>
<div class="t" style="top:433.00px;font-size:8.8px;line-height:8.8px;font-weight:400;color:#5e6a75;letter-spacing:-0.3px;-webkit-text-stroke:0.16px currentColor;right:358px;text-align:right;">Lachlan Benbow</div>
<div class="t" style="top:447.93px;font-size:8.8px;line-height:8.8px;font-weight:400;color:#5e6a75;letter-spacing:-0.3px;-webkit-text-stroke:0.16px currentColor;right:358px;text-align:right;">Valentina Nervi</div>
<div class="t" style="top:462.86px;font-size:8.8px;line-height:8.8px;font-weight:400;color:#5e6a75;letter-spacing:-0.3px;-webkit-text-stroke:0.16px currentColor;right:358px;text-align:right;">Casie Hendriks</div>
<div class="t" style="top:477.79px;font-size:8.8px;line-height:8.8px;font-weight:400;color:#5e6a75;letter-spacing:-0.3px;-webkit-text-stroke:0.16px currentColor;right:358px;text-align:right;">Benny Marquez</div>
<div class="t" style="top:492.72px;font-size:8.8px;line-height:8.8px;font-weight:400;color:#5e6a75;letter-spacing:-0.3px;-webkit-text-stroke:0.16px currentColor;right:358px;text-align:right;">Amelia Casias</div>
<div class="t" style="top:507.65px;font-size:8.8px;line-height:8.8px;font-weight:400;color:#5e6a75;letter-spacing:-0.3px;-webkit-text-stroke:0.16px currentColor;right:358px;text-align:right;">Björn Eklund</div>
<div class="t" style="top:522.58px;font-size:8.8px;line-height:8.8px;font-weight:400;color:#5e6a75;letter-spacing:-0.3px;-webkit-text-stroke:0.16px currentColor;right:358px;text-align:right;">Ben Adams</div>
<div class="t" style="top:537.51px;font-size:8.8px;line-height:8.8px;font-weight:400;color:#5e6a75;letter-spacing:-0.3px;-webkit-text-stroke:0.16px currentColor;right:358px;text-align:right;">Brian Kaplan</div>
<div class="t" style="top:552.44px;font-size:8.8px;line-height:8.8px;font-weight:400;color:#5e6a75;letter-spacing:-0.6px;-webkit-text-stroke:0.16px currentColor;right:358px;text-align:right;">Daehan Kim（김대한）</div>
<div class="t" style="top:567.37px;font-size:8.8px;line-height:8.8px;font-weight:400;color:#5e6a75;letter-spacing:-0.3px;-webkit-text-stroke:0.16px currentColor;right:358px;text-align:right;">Boris Stepanek</div>
<div class="t" style="top:582.30px;font-size:8.8px;line-height:8.8px;font-weight:400;color:#5e6a75;letter-spacing:-0.3px;-webkit-text-stroke:0.16px currentColor;right:358px;text-align:right;">Gema Pertiwi Saghalawa</div>
<div class="t" style="top:597.23px;font-size:8.8px;line-height:8.8px;font-weight:400;color:#5e6a75;letter-spacing:-0.3px;-webkit-text-stroke:0.16px currentColor;right:358px;text-align:right;">Kevin Turner</div>
<div class="t" style="top:612.16px;font-size:8.8px;line-height:8.8px;font-weight:400;color:#5e6a75;letter-spacing:-0.3px;-webkit-text-stroke:0.16px currentColor;right:358px;text-align:right;">Stefania Jaworski</div>
<div style="position:absolute;left:0px;top:616px;width:1000px;height:9px;background:linear-gradient(180deg,rgba(236,238,240,0) 0%,rgba(236,238,240,0.55) 100%)"></div>
</body></html>
